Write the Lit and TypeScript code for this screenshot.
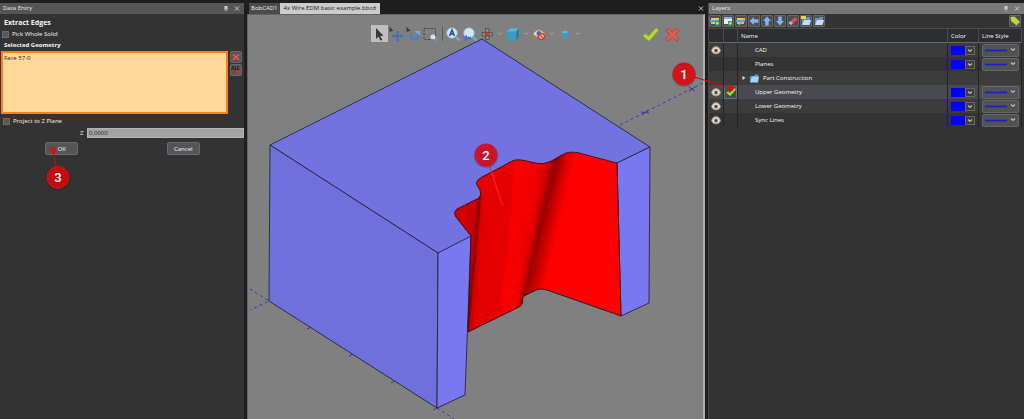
import { LitElement, html, svg, css } from "lit";
import { customElement } from "lit/decorators.js";
import { classMap } from "lit/directives/class-map.js";

interface Layer {
  name: string;
  visible: boolean;
  active?: boolean;
  folder?: boolean;
}

const LAYERS: Layer[] = [
  { name: "CAD", visible: true },
  { name: "Planes", visible: false },
  { name: "Part Construction", visible: false, folder: true },
  { name: "Upper Geometry", visible: true, active: true },
  { name: "Lower Geometry", visible: true },
  { name: "Sync Lines", visible: true },
];

/** One ruling of the shaded wall: x on the top rail, x on the bottom rail, red level. */
type Ruling = [number, number, number];

const LEFT_WALL: Ruling[] = [
  [452, 452, 212], [475, 462, 200], [478, 466, 176], [480, 467, 100], [482, 470, 204], [485, 476, 228],
  [512, 501, 232], [513, 502, 244], [520, 506, 248],
];

const SLOT_WALL: Ruling[] = [
  [520, 500, 248], [540, 514, 240], [547, 517, 220], [554, 519, 175], [559, 521, 130], [562, 523, 170],
  [566, 530, 206], [571, 536, 234], [576, 540, 254], [580, 546, 255],
];

/** Outline of the wire-cut face. */
const CUT_FACE =
  "M617 163L579 153C570 151 565 153 562 155 556 158 552 162 543 163.500 532 164 525 159 516 160Q513 160 505 165L482 177Q475 181 477 185L480 190Q482 194 479 198L457 209Q453 212 456 217L471 236 468 332 519 307Q521 306 522 304C523 303 522 297 524 296L536 290Q541 288 547 290L621 316z";

/** Fills the space between rulings with thin quads whose red level blends from one to the next. */
function shade(rulings: Ruling[], top: number, bottom: number) {
  const steps = 6;
  return rulings.slice(1).map((b, i) => {
    const a = rulings[i];
    return Array.from({ length: steps }, (_, k) => {
      const mix = (j: number, t: number) => a[j] + (b[j] - a[j]) * t;
      const t0 = k / steps;
      const t1 = (k + 1.4) / steps;
      const points = `${mix(0, t0)},${top} ${mix(0, t1)},${top} ${mix(1, t1)},${bottom} ${mix(1, t0)},${bottom}`;
      return svg`<polygon points=${points} fill=${`rgb(${Math.round(mix(2, t0))},0,0)`}/>`;
    });
  });
}

const shared = css`
  *, *::before, *::after { box-sizing: border-box; }
  button, input, textarea, select { font: inherit; color: inherit; margin: 0; padding: 0; border-radius: 0; }
  button { cursor: default; }
  svg { display: block; }
  .title {
    display: flex;
    align-items: center;
    height: 11px;
    padding: 0 4px 0 3px;
    gap: 5px;
    line-height: 11px;
    color: #e8e8e8;
  }
  .title h2 { flex: 1; margin: 0; font-size: 6px; font-weight: 400; }
  .title button { width: 6px; height: 9px; border: 0; background: none; }
  .callout { position: absolute; overflow: visible; pointer-events: none; }
`;

const pin = svg`<path d="M1.500 2h3v3.500h-3z" fill="#d0d0d0"/><path d="M1 6h4M3 6v2" stroke="#a0a0a0" stroke-width=".7"/>`;
const cross = svg`<path d="M1 2.500l4 4M5 2.500l-4 4" stroke="#d4d4d4" stroke-width=".9"/>`;
const redX = svg`<path d="M2.500 1L6 4.200 9.500 1 11.500 3 8.200 6 11.500 9.500 9.500 11.300 6 8 2.500 11.300.500 9.500 3.800 6 .500 3z" fill="#dc6052" stroke="#bb4238" stroke-width=".8" stroke-linejoin="round"/>`;
const tick = svg`<path d="M.500 7L2.600 5.400 4.600 7.200 10 1.300 11.800 3 5 10.800z" fill="#b6da38" stroke="#86a828" stroke-width=".6" stroke-linejoin="round"/>`;

function marker(label: string, cx: number, cy: number, x: number, y: number, fill = "#c40c10", line = "#d8060c") {
  return svg`
    <line x1=${cx} y1=${cy} x2=${x} y2=${y} stroke=${line} stroke-width="1.200"/>
    <circle cx=${x} cy=${y} r="2.600" fill="#e80c10" stroke="#c40808" stroke-width=".5"/>
    <circle cx=${cx} cy=${cy + 0.6} r="12.200" fill="#000" opacity=".22"/>
    <circle cx=${cx} cy=${cy} r="11" fill=${fill} stroke="#d8141a" stroke-width="1"/>
    <text x=${cx} y=${cy + 4.5} text-anchor="middle" font-family="Roboto, sans-serif" font-size="13" font-weight="500" fill="#fff">${label}</text>`;
}

@customElement("data-entry")
export class DataEntry extends LitElement {
  static styles = [shared, css`
    :host { display: block; position: relative; background: #333334; color: #f6f6f6; }
    .title { background: #555557; }
    form { display: flex; flex-direction: column; padding: 3px 0 0 1px; }
    h3 { margin: 0 0 0 3px; font-size: 7px; line-height: 11px; }
    .check { display: flex; align-items: center; gap: 3px; height: 12px; margin-left: 1px; line-height: 12px; }
    .check input { appearance: none; width: 7px; height: 7px; background: #58585a; border: 1px solid #6a6a6c; }
    .group { margin-left: 3px; font-weight: 700; line-height: 11px; display: block; }
    .picker { display: flex; gap: 2px; padding-right: 2px; }
    textarea {
      flex: 1; min-width: 0; height: 63px; padding: 1px 1px; resize: none; outline: 0;
      background: #ffd999; color: #1c1810; border: 2px solid #f5821f; line-height: 8px;
    }
    .side { display: flex; flex-direction: column; gap: 1px; }
    .side button { width: 12px; height: 12px; display: grid; place-items: center; background: #555557; border: 1px solid #69696b; border-radius: 2px; }
    .project { margin: 1px 0 0 2px; }
    .value { display: flex; align-items: center; gap: 2px; margin-left: 79px; }
    .value label { width: 5px; }
    .value input { flex: 1; min-width: 0; height: 10px; padding: 0 1px; background: #a3a3a3; border: 1px solid #b4b4b4; color: #1c1c1c; line-height: 8px; }
    .actions { display: grid; grid-template-columns: 1fr 1fr; justify-items: center; margin-top: 3px; }
    .actions button { width: 33px; height: 13px; background: #555557; border: 1px solid #69696b; border-radius: 2px; line-height: 10px; }
    .callout { left: 40px; top: 142px; }
  `];

  render() {
    return html`
      <div class="title"><h2>Data Entry</h2>
        <button aria-label="Pin"><svg width="6" height="9">${pin}</svg></button>
        <button aria-label="Close"><svg width="6" height="9">${cross}</svg></button>
      </div>
      <form @submit=${(e: Event) => e.preventDefault()}>
        <h3>Extract Edges</h3>
        <label class="check"><input type="checkbox" />Pick Whole Solid</label>
        <label class="group" for="geometry">Selected Geometry</label>
        <div class="picker">
          <textarea id="geometry" spellcheck="false" .value=${"Face 57-0"}></textarea>
          <div class="side">
            <button type="button" aria-label="Remove"><svg width="8" height="8" viewBox="0 0 12 12">${redX}</svg></button>
            <button type="button" aria-label="Remove all">
              <svg width="10" height="10" viewBox="0 0 10 10">
                <text x="0" y="4.500" font-family="Lato, sans-serif" font-size="5" font-weight="700" fill="#141414">ALL</text>
                <path d="M5 5l4 4.500M9 5l-4 4.500" stroke="#c8372e" stroke-width="1.500"/>
              </svg>
            </button>
          </div>
        </div>
        <label class="check project"><input type="checkbox" />Project to Z Plane</label>
        <div class="value"><label for="z">Z</label><input id="z" type="text" value="0.0000" /></div>
        <div class="actions"><button>OK</button><button type="button">Cancel</button></div>
      </form>
      <svg class="callout" width="32" height="50">${marker("3", 18, 32.5, 13, 5)}</svg>
    `;
  }
}

@customElement("model-view")
export class ModelView extends LitElement {
  static styles = [shared, css`
    :host { display: flex; flex-direction: column; }
    .tabs { display: flex; align-items: center; height: 11px; padding: 0 1px 0 2px; }
    .tabs button { border: 0; height: 11px; padding: 0 2px; background: #4b4b4d; color: #f0f0f0; line-height: 11px; white-space: nowrap; }
    .tabs .current { background: #cccccc; color: #161616; padding: 0 4px; }
    .tabs .close { margin-left: auto; width: 6px; height: 9px; padding: 0; background: none; }
    .stage { position: relative; flex: 1; min-height: 400px; background: #808080; border: 1px solid #626262; border-width: 1px 2px 0 1px; border-right-color: #b0b0b0; overflow: hidden; }
    .scene { position: absolute; inset: 0; width: 100%; height: 100%; }
    .tools { position: absolute; top: 10px; left: 27%; display: flex; align-items: center; }
    .tools button { width: 17px; height: 17px; display: grid; place-items: center; border: 0; background: none; }
    .tools .on { background: #bfbfbf; }
    .tools .more { width: 9px; }
    .sep { width: 1px; height: 14px; margin: 0 2px 0 3px; background: #5c5c5c; }
    .confirm { position: absolute; top: 11px; right: 21px; display: flex; gap: 6px; }
    .confirm button { width: 17px; height: 17px; border: 0; background: none; }
  `];

  private tool(label: string, art: unknown, on = false) {
    return html`<button class=${classMap({ on })} aria-label=${label}><svg width="16" height="16" viewBox="0 0 16 16">${art}</svg></button>`;
  }

  private more(label: string) {
    return html`<button class="more" aria-label=${label}><svg width="6" height="6"><path d="M1 1.500l2 2 2-2" fill="none" stroke="#acacac"/></svg></button>`;
  }

  render() {
    const cursor = svg`<path d="M1.500.500v6l1.500-1.300L5.500 5z" fill="#3c3c3c"/>`;
    const lens = svg`<circle cx="7" cy="7" r="5.300" fill="#cfe6f4" stroke="#9db4c2" stroke-width=".8"/>`;
    const handle = svg`<path d="M11.500 11.500l2.500 2.500" stroke="#7aa8e4" stroke-width="2.200" stroke-linecap="round"/>`;
    return html`
      <div class="tabs" role="tablist">
        <button role="tab">BobCAD1</button>
        <button role="tab" class="current" aria-selected="true">4x Wire EDM basic example.bbcd</button>
        <button class="close" aria-label="Close"><svg width="6" height="9">${cross}</svg></button>
      </div>
      <div class="stage">
        <svg class="scene" viewBox="248 15 455 404" preserveAspectRatio="xMidYMin slice" role="img" aria-label="Wire EDM part">
          <defs><clipPath id="cut"><path d=${CUT_FACE}/></clipPath></defs>
          <g fill="none" stroke="#3838b0">
            <path d="M250 289l19 12-19 9M437 408l17 11M620 125l83-42" stroke-dasharray="3 3"/>
            <path d="M307 329l5-2M349 356l4-2M391 383l4-2M433 410l8-4M641 112l8 1M642 115l6-5M689 87l6 4M689 91l6-4"/>
          </g>
          <g stroke="#26263c" stroke-width=".9" stroke-linejoin="round">
            <path d="M270 145L482 39 650 147 617 163 482 250 438 253z" fill="#7272e0"/>
            <path d="M270 145L438 253 437 408 269 301z" fill="#7070dc"/>
            <path d="M438 253L471 236 465 395 437 408z" fill="#7878f0"/>
            <path d="M617 163L650 147 649 303 621 316z" fill="#7878f0"/>
          </g>
          <path d=${CUT_FACE} fill="#ff0000"/>
          <g clip-path="url(#cut)">
            ${shade(LEFT_WALL, 195, 332)}
            <path d="M481 196L474 180 484 165 515 155 512 196z" fill="#e60000"/>
            <path d="M512 196L515 155H530L519 196z" fill="#f80000"/>
            ${shade(SLOT_WALL, 153, 308)}
          </g>
          <path d=${CUT_FACE} fill="none" stroke="#30101c" stroke-width=".9" stroke-linejoin="round"/>
          ${marker("2", 486, 155, 502, 204, "#c8142c", "#f8202c")}
        </svg>
        <div class="tools">
          ${this.tool("Select", svg`<path d="M5 2v11l2.500-2.300 2 4 1.800-1-2-3.700 3.200-.3z" fill="#3a3a3a"/>`, true)}
          ${this.tool("Move", svg`${cursor}<path d="M9.500 5v10M4.500 10h10" stroke="#4068b4" stroke-width="1.300"/><path d="M9.500 4l2.200 2.700H7.300zM9.500 16l2.200-2.700H7.300zM3.500 10l2.700-2.200v4.400zM15.500 10l-2.700-2.200v4.400z" fill="#4470c0"/>`)}
          ${this.tool("Rotate", svg`${cursor}<path d="M6.500 7a4 4 0 1 0 6.500 0" fill="none" stroke="#4a7bcc" stroke-width="2.200"/><path d="M9.500 5h5.500v5z" fill="#7ea8e4"/>`)}
          ${this.tool("Box select", svg`<path d="M2 2.500h11.500v11H2z" fill="none" stroke="#444" stroke-dasharray="2 1.500"/><circle cx="11" cy="11" r="2.500" fill="#d0e6f2"/><path d="M13 13l1.500 1.500" stroke="#6e9ede" stroke-width="1.800"/>`)}
          <span class="sep"></span>
          ${this.tool("Zoom all", svg`${lens}${handle}<path d="M4.500 10L7 4l2.500 6M5.300 8h3.400" fill="none" stroke="#1d4f9c" stroke-width="1.500"/>`)}
          ${this.tool("Zoom previous", svg`${lens}${handle}<path d="M1 12l4-3.500v2.200h4v2.800H5v2z" fill="#4078cc"/>`)}
          ${this.tool("Section", svg`<path d="M6.500 2.500h3.500v4H6.500zM3 6.500h3.500v3.500H3zM10 6.500h3.500v3.500H10zM6.500 10h3.500v3.500H6.500z" fill="#8a8a8a" stroke="#505050" stroke-width=".9"/><path d="M6.500 6.500h3.500v3.500H6.500z" fill="#d8322e"/>`)}
          ${this.more("Section options")}
          ${this.tool("Shading", svg`<path d="M2 5.500l3-3h9l-3 3v9H2z" fill="#3a9cc4"/><path d="M2 5.500l3-3h9l-3 3z" fill="#5cb6d8"/><path d="M11 5.500l3-3V11l-3 3.500z" fill="#2580a6"/>`)}
          ${this.more("Shading options")}
          ${this.tool("Visibility", svg`<path d="M2 8q6-8 12 0-6 6-12 0z" fill="#e9dccb" stroke="#d0965a"/><circle cx="8" cy="7.500" r="2.500" fill="#466f9c"/><circle cx="10.500" cy="10.500" r="3" fill="#e6c4c0" stroke="#cc3c38" stroke-width="1.300"/><path d="M8.500 8.500l4 4" stroke="#cc3c38" stroke-width="1.300"/>`)}
          ${this.more("Visibility options")}
          ${this.tool("Orientation", svg`<path d="M8 2v12M2.500 10l11-5" stroke="#a08078" stroke-width=".8"/><path d="M4.500 6L8 4.500 11.500 6v4.500L8 12.500l-3.500-2z" fill="#3a9cc4"/><path d="M4.500 6L8 4.500 11.500 6 8 7.500z" fill="#62b8d8"/>`)}
          ${this.more("Orientation options")}
        </div>
        <div class="confirm">
          <button aria-label="Accept"><svg width="17" height="17" viewBox="0 0 12 12">${tick}</svg></button>
          <button aria-label="Reject"><svg width="15" height="17" viewBox="0 0 12 12">${redX}</svg></button>
        </div>
      </div>
    `;
  }
}

@customElement("layer-panel")
export class LayerPanel extends LitElement {
  static styles = [shared, css`
    :host { display: block; position: relative; background: #333334; color: #f6f6f6; border-left: 1px solid #48484a; }
    .title { background: #777777; }
    .bar { display: flex; gap: 1px; height: 14px; padding: 1px 3px 0 0; }
    .bar button { width: 12px; height: 12px; display: grid; place-items: center; background: #4e4e50; border: 1px solid #67676a; border-radius: 1px; }
    .bar .tag { margin-left: auto; }
    table { width: calc(100% - 2px); border-collapse: separate; border-spacing: 0; table-layout: fixed; }
    th, td { height: 14px; padding: 0; font-weight: 400; text-align: left; line-height: 14px; border-right: 1px solid #242425; white-space: nowrap; }
    th { height: 15px; line-height: 12px; background: #2d2e32; border-top: 1px solid #4c4c4e; border-bottom: 1px solid #666; border-right-color: #4c4c4e; padding: 1px 0 0 3px; }
    .name, .folder { line-height: 14px; }
    tr:nth-child(odd) td { background: #3c3c3d; }
    tr:nth-child(even) td { background: #333334; }
    tr.active td { background: #484a4f; }
    .c1 { width: 15px; }
    .c2 { width: 14px; }
    .c4 { width: 31px; }
    .c5 { width: 43px; }
    td svg { margin: auto; }
    .name { padding-left: 17px; }
    .name.folder { display: flex; align-items: center; gap: 4px; padding-left: 3px; }
    .folder svg { margin: 0; }
    .name button { width: 5px; height: 10px; border: 0; background: none; display: grid; place-items: center; }
    .mark { border: 1px solid #5d7388; height: 13px; display: grid; place-items: center; }
    .color { display: flex; width: 24px; height: 9px; margin-left: 3px; padding: 0; border: 0; background: #0000ff; }
    .color i { margin-left: auto; width: 10px; height: 9px; border: 1px solid #666; background: #3c3c3d; }
    .line { display: flex; align-items: center; justify-content: space-between; width: 37px; height: 13px; margin-left: 3px; padding: 0 2px; background: #525254; border: 1px solid #666668; border-radius: 2px; }
    .line svg { margin: 0; }
    .callout { left: -37px; top: 58px; }
  `];

  private icon(label: string, art: unknown, cls = "") {
    return html`<button class=${cls} aria-label=${label}><svg width="10" height="10" viewBox="0 0 10 10">${art}</svg></button>`;
  }

  private row(layer: Layer) {
    const eye = svg`<path d="M.500 4.500Q1.500.500 5 .500T9.500 4.500Q8.500 8 5 8T.500 4.500z" fill="#ead2bc" stroke="#bc8c60" stroke-width=".9"/><path d="M1.500 4.800Q5 1.500 8.500 4.800 5 7.500 1.500 4.800z" fill="#e8f0f6"/><circle cx="5" cy="4.600" r="1.900" fill="#3f76ac"/><circle cx="5" cy="4.600" r=".8" fill="#16263c"/>`;
    const chevron = svg`<path d="M1 1.500l2 2 2-2" fill="none" stroke="#b8b8b8" stroke-width="1.200"/>`;
    return html`
      <tr class=${classMap({ active: !!layer.active })}>
        <td>${layer.visible ? html`<svg width="10" height="9">${eye}</svg>` : null}</td>
        <td>${layer.active ? html`<div class="mark"><svg width="10" height="10" viewBox="0 0 12 12">${tick}</svg></div>` : null}</td>
        <td>${layer.folder
          ? html`<div class="folder name"><button aria-label="Expand"><svg width="4" height="6"><path d="M.500 1l3 2-3 2z" fill="#ddd"/></svg></button>
              <svg width="9" height="9"><path d="M0 2h4l1-1.500h3V8H0z" fill="#4f92dc"/><path d="M2 2.500h7L8 8.500H0z" fill="#a9d2f8"/></svg>${layer.name}</div>`
          : html`<div class="name">${layer.name}</div>`}</td>
        <td>${layer.folder ? null : html`<button class="color" aria-label="${layer.name} color"><i><svg width="8" height="7" viewBox="-1 -1 8 7">${chevron}</svg></i></button>`}</td>
        <td>${layer.folder ? null : html`<button class="line" aria-label="${layer.name} line style"><svg width="22" height="3"><path d="M0 1.500h22" stroke="#1c1cd0" stroke-width="1.600"/></svg><svg width="6" height="6">${chevron}</svg></button>`}</td>
      </tr>`;
  }

  render() {
    const stack = svg`<path d="M1 2h8v2H1z" fill="#e8c85c"/><path d="M0 4h9v2H0z" fill="#4aa4e0"/><path d="M1 6h7v2H1z" fill="#9cc8e8"/>`;
    const plus = svg`<path d="M5 5h4.500v4.500H5z" fill="#3c9c34"/><path d="M7.200 5.800v3M5.800 7.200h3" stroke="#d8f0d0" stroke-width=".9"/>`;
    const folder = svg`<path d="M1 2h4l1-1h3v7H1z" fill="#5c94dc"/><path d="M3 4h7L8.500 9H1z" fill="#c4dcf4"/>`;
    return html`
      <div class="title"><h2>Layers</h2>
        <button aria-label="Pin"><svg width="6" height="9">${pin}</svg></button>
        <button aria-label="Close"><svg width="6" height="9">${cross}</svg></button>
      </div>
      <div class="bar" role="toolbar">
        ${this.icon("New layer", svg`${stack}${plus}`)}
        ${this.icon("New folder", svg`<path d="M1 1h3l1 1h4v6H1z" fill="#e4ecf4"/><path d="M1 1h8v2H1z" fill="#8eb0dc"/>${plus}`)}
        ${this.icon("Edit layer", svg`${stack}<path d="M3 9l5-6" stroke="#d89a3c" stroke-width="1.200"/>`)}
        ${this.icon("Move left", svg`<path d="M.500 5L5 1v2.300h4.500v3.400H5V9z" fill="#86b0f0"/>`)}
        ${this.icon("Move up", svg`<path d="M5 .500L9 5H6.800v4.500H3.200V5H1z" fill="#86b0f0"/>`)}
        ${this.icon("Move down", svg`<path d="M5 9.500L1 5h2.200V.500h3.600V5H9z" fill="#86b0f0"/>`)}
        ${this.icon("Erase", svg`<path d="M2.500 5L7 1l2.500 2.500L5 7.500z" fill="#e44848"/><path d="M.500 7l2-2L5 7.500 3 9z" fill="#a4c0f0"/>`)}
        ${this.icon("Add to folder", svg`${folder}<path d="M0 0h5v3H0z" fill="#f0d040"/>`)}
        ${this.icon("Open folder", folder)}
        ${this.icon("Tag", svg`<path d="M.500 1l4-.5L10 6 6.500 9.500 1 5z" fill="#b4d83c"/>`, "tag")}
      </div>
      <table>
        <thead><tr><th class="c1"></th><th class="c2"></th><th>Name</th><th class="c4">Color</th><th class="c5">Line Style</th></tr></thead>
        <tbody>${LAYERS.map((l) => this.row(l))}</tbody>
      </table>
      <svg class="callout" width="64" height="34">${marker("1", 12, 13, 59, 27, "#d01418")}</svg>
    `;
  }
}

@customElement("app-root")
export class AppRoot extends LitElement {
  static styles = css`
    :host {
      display: grid;
      grid-template-columns: minmax(200px, 244px) minmax(300px, 1fr) minmax(240px, 316px);
      column-gap: 3px;
      min-height: 100vh;
      box-sizing: border-box;
      padding-top: 3px;
      background: #1e1e1f;
      font: 6px/12px "Open Sans", "Noto Sans", sans-serif;
    }
  `;

  render() {
    return html`<data-entry></data-entry><model-view></model-view><layer-panel></layer-panel>`;
  }
}
